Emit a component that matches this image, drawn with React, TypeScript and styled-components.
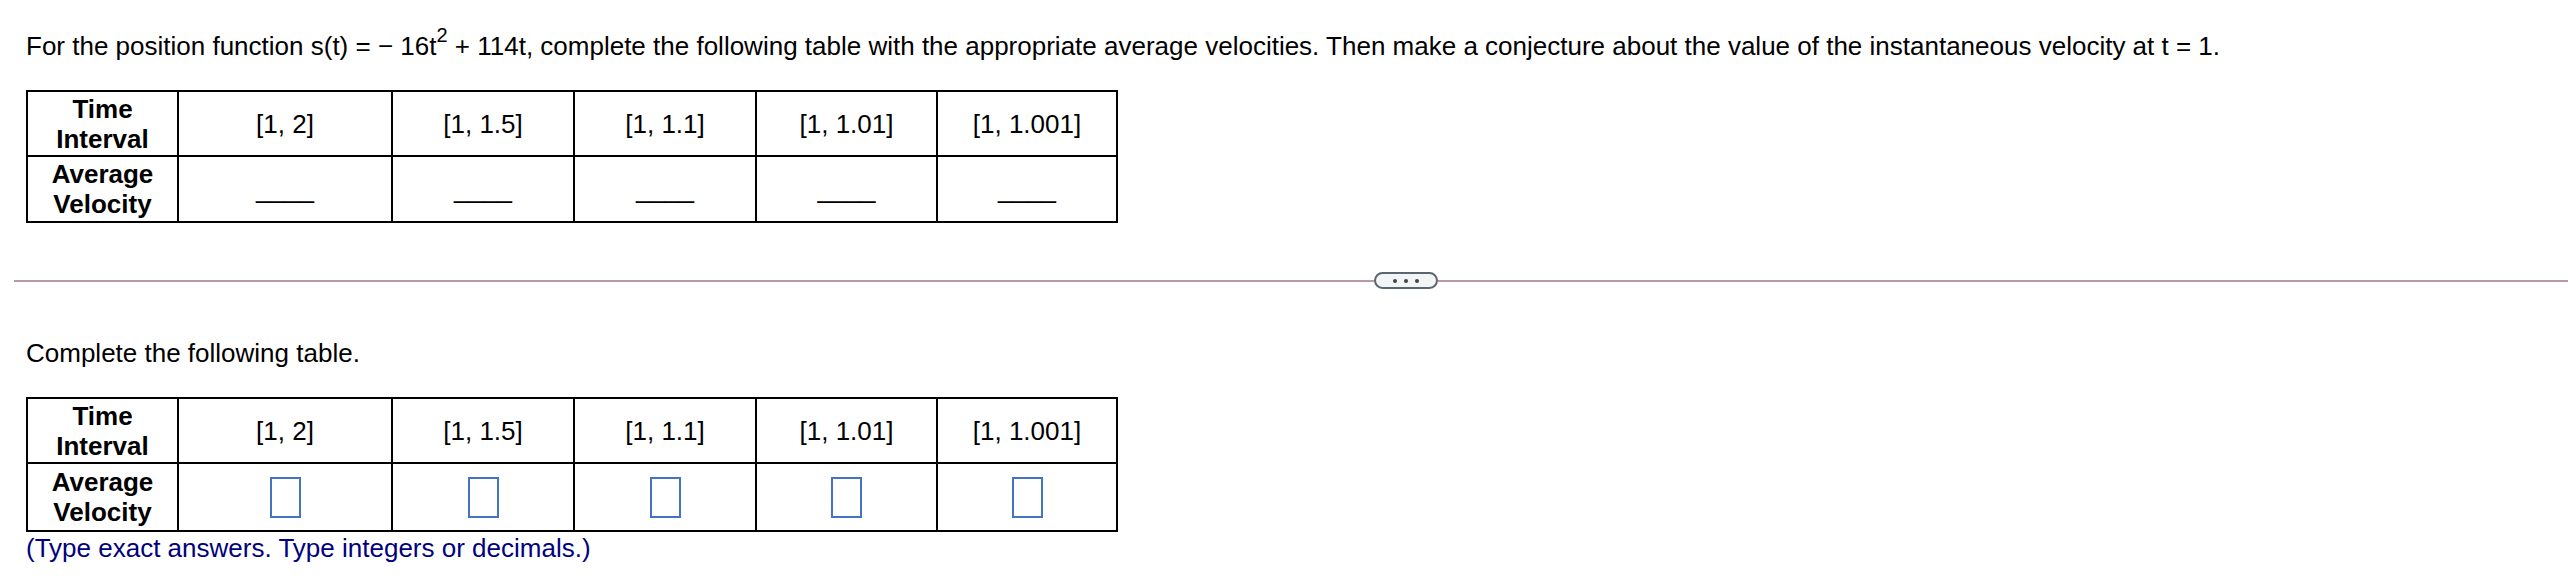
import React from "react";
import styled, { createGlobalStyle } from "styled-components";

const GlobalStyle = createGlobalStyle`
  html, body {
    margin: 0;
    padding: 0;
    background: #fff;
  }
  body {
    width: 2568px;
    height: 586px;
    overflow: hidden;
    font-family: "Liberation Sans", Arial, sans-serif;
    color: #000;
  }
`;

const Page = styled.div`
  display: flex;
  flex-direction: column;
  padding: 31px 0 0 14px;
`;

const Section = styled.section<{ $top?: number }>`
  display: flex;
  flex-direction: column;
  align-items: flex-start;
  padding-left: 12px;
  margin-top: ${(props) => props.$top ?? 0}px;
`;

const Prompt = styled.p`
  margin: 0;
  font-size: 26px;
  line-height: 30px;
  white-space: nowrap;
`;

const Sup = styled.span`
  font-size: 20px;
  line-height: 0;
  vertical-align: 13px;
`;

const TableGrid = styled.div<{ $top: number; $lastRow: number }>`
  display: grid;
  grid-template-columns: 149px 212px 180px 180px 179px 178px;
  grid-template-rows: 63px ${(props) => props.$lastRow}px;
  gap: 2px;
  padding: 2px;
  background: #000;
  margin-top: ${(props) => props.$top}px;
`;

const Cell = styled.div<{ $bold?: boolean }>`
  background: #fff;
  display: flex;
  align-items: center;
  justify-content: center;
  text-align: center;
  font-size: 26px;
  line-height: 30px;
  font-weight: ${(props) => (props.$bold ? 700 : 400)};
`;

const Blank = styled.span`
  letter-spacing: 0;
`;

const AnswerBox = styled.input`
  box-sizing: border-box;
  width: 31px;
  height: 41px;
  margin: 0;
  padding: 0;
  border: 2px solid #4472c4;
  background: #fff;
  outline: none;
`;

const Divider = styled.div`
  display: flex;
  align-items: center;
  height: 17px;
  margin-top: 49px;
`;

const Rule = styled.div<{ $width?: number }>`
  height: 2px;
  background: #b89aa5;
  flex: ${(props) => (props.$width ? `0 0 ${props.$width}px` : "1")};
`;

const MoreButton = styled.button`
  box-sizing: border-box;
  width: 64px;
  height: 17px;
  padding: 0;
  border: 2px solid #5b6670;
  border-radius: 9px;
  background: #f2f4f6;
  display: flex;
  align-items: center;
  justify-content: center;
  gap: 7px;
`;

const Dot = styled.span`
  width: 4px;
  height: 4px;
  border-radius: 50%;
  background: #3b4550;
`;

const Hint = styled.p`
  margin: 0;
  font-size: 26px;
  line-height: 32px;
  color: #000080;
  white-space: nowrap;
`;

const intervals = ["[1, 2]", "[1, 1.5]", "[1, 1.1]", "[1, 1.01]", "[1, 1.001]"];

const VelocityTable = ({ top, lastRow, inputs }: any) => (
  <TableGrid $top={top} $lastRow={lastRow}>
    <Cell $bold>
      Time
      <br />
      Interval
    </Cell>
    {intervals.map((iv) => (
      <Cell key={iv}>{iv}</Cell>
    ))}
    <Cell $bold>
      Average
      <br />
      Velocity
    </Cell>
    {intervals.map((iv) => (
      <Cell key={"v" + iv}>
        {inputs ? <AnswerBox type="text" aria-label={"average velocity on " + iv} /> : <Blank>____</Blank>}
      </Cell>
    ))}
  </TableGrid>
);

const App = () => {
  return (
    <>
      <GlobalStyle />
      <Page>
        <Section>
          <Prompt>
            For the position function s(t) = − 16t<Sup>2</Sup> + 114t, complete the following table with the
            appropriate average velocities. Then make a conjecture about the value of the instantaneous velocity
            at t = 1.
          </Prompt>
          <VelocityTable top={29} lastRow={64} />
        </Section>

        <Divider>
          <Rule $width={1360} />
          <MoreButton aria-label="more">
            <Dot />
            <Dot />
            <Dot />
          </MoreButton>
          <Rule />
        </Divider>

        <Section $top={49}>
          <Prompt>Complete the following table.</Prompt>
          <VelocityTable top={29} lastRow={66} inputs />
          <Hint>(Type exact answers. Type integers or decimals.)</Hint>
        </Section>
      </Page>
    </>
  );
};

export default App;
